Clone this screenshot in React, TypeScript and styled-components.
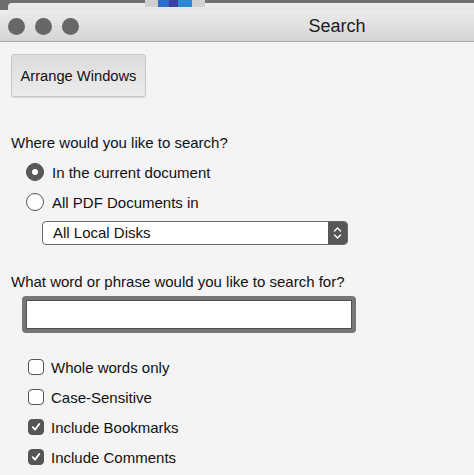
import styled, { createGlobalStyle } from 'styled-components';

const GlobalStyle = createGlobalStyle`
  html, body {
    margin: 0;
    padding: 0;
    background: #f4f4f4;
    overflow: hidden;
  }
  body {
    font-family: "Liberation Sans", Arial, sans-serif;
    color: #111;
  }
`;

const Screen = styled.div`
  width: 474px;
  height: 475px;
  overflow: hidden;
  background: #f4f4f4;
`;

const Desktop = styled.div`
  height: 10px;
  background: #6f6f6f;
  display: flex;
  padding: 3px 0 0 8px;
  box-sizing: border-box;
`;

const BackWindow = styled.div`
  flex: 1;
  display: flex;
  align-items: flex-start;
  background: linear-gradient(#efefef, #e4e4e4);
  border-top-left-radius: 4px;
  padding-left: 137px;
`;

const DockIcon = styled.div`
  width: 60px;
  height: 7px;
  margin-top: -3px;
  background: linear-gradient(
    to right,
    #cfcfcf 0 22%,
    #2a6fd0 22% 40%,
    #3a3fa8 40% 55%,
    #2a8ad8 55% 78%,
    #d2d2d2 78%
  );
`;

const Window = styled.div`
  width: 674px;
`;

const TitleBar = styled.div`
  height: 30px;
  display: grid;
  grid-template-columns: 1fr auto 1fr;
  align-items: center;
  background: linear-gradient(#ececec, #d5d5d5);
  border-bottom: 1px solid #a9a9a9;
  padding: 1px 8px 0;
  box-sizing: content-box;
`;

const Lights = styled.div`
  display: flex;
  gap: 10px;
`;

const Light = styled.span`
  width: 17px;
  height: 17px;
  border-radius: 50%;
  background: #676767;
`;

const Title = styled.div`
  font-size: 18px;
  color: #1c1c1c;
`;

const Content = styled.div`
  padding: 12px 11px;
  display: flex;
  flex-direction: column;
  align-items: flex-start;
`;

const PushButton = styled.button`
  width: 135px;
  height: 43px;
  font-family: inherit;
  font-size: 14.7px;
  color: #111;
  border: 1px solid #c6c6c6;
  border-radius: 3px;
  background: linear-gradient(#dcdcdc, #ececec);
  box-shadow: 0 1px 0 #d6d6d6;
  padding: 0;
`;

const Label = styled.div<{ $gap: number }>`
  font-size: 15px;
  line-height: 18px;
  margin-top: ${(p) => p.$gap}px;
`;

const OptionRow = styled.div<{ $indent: number; $gap?: number }>`
  height: 30px;
  display: flex;
  align-items: center;
  gap: ${(p) => p.$gap ?? 8}px;
  margin-left: ${(p) => p.$indent}px;
  font-size: 15px;
`;

const RadioGroup = styled.div`
  margin-top: 5px;
  display: flex;
  flex-direction: column;
`;

const Radio = styled.span<{ $on?: boolean }>`
  width: 18px;
  height: 18px;
  box-sizing: border-box;
  border-radius: 50%;
  border: 1px solid ${(p) => (p.$on ? '#4e4e4e' : '#555')};
  background: ${(p) => (p.$on ? '#595959' : '#fff')};
  display: flex;
  align-items: center;
  justify-content: center;
  &::after {
    content: '';
    display: ${(p) => (p.$on ? 'block' : 'none')};
    width: 6px;
    height: 6px;
    border-radius: 50%;
    background: #fff;
  }
`;

const Check = styled.span<{ $on?: boolean }>`
  width: 16px;
  height: 16px;
  box-sizing: border-box;
  border-radius: 4px;
  border: 1px solid #555;
  background: ${(p) => (p.$on ? '#555' : '#fff')};
  display: flex;
  align-items: center;
  justify-content: center;
`;

const Select = styled.div`
  margin: 4px 0 0 31px;
  width: 306px;
  height: 24px;
  box-sizing: border-box;
  border: 1px solid #6a6a6a;
  border-radius: 4px;
  background: #fff;
  display: flex;
  overflow: hidden;
`;

const SelectText = styled.div`
  flex: 1;
  font-size: 15px;
  line-height: 22px;
  padding-left: 10px;
`;

const Stepper = styled.div`
  width: 19px;
  background: #575757;
  display: flex;
  align-items: center;
  justify-content: center;
`;

const TextField = styled.div`
  margin: 5px 0 0 11px;
  width: 334px;
  height: 37px;
  box-sizing: border-box;
  border: 4px solid #767676;
  border-radius: 4px;
  background: #fff;
  box-shadow: inset 0 0 0 1px #505050;
`;

const Checks = styled.div`
  margin-top: 19px;
  display: flex;
  flex-direction: column;
`;

const Tick = () => (
  <svg width="10" height="10" viewBox="0 0 10 10">
    <path d="M1.8 5.2 L4 7.6 L8.3 2" fill="none" stroke="#fff" strokeWidth="1.9" strokeLinecap="round" strokeLinejoin="round" />
  </svg>
);

const Arrows = () => (
  <svg width="9" height="14" viewBox="0 0 9 14">
    <path d="M1.5 5 L4.5 2 L7.5 5 M1.5 9 L4.5 12 L7.5 9" fill="none" stroke="#fff" strokeWidth="1.4" strokeLinecap="round" strokeLinejoin="round" />
  </svg>
);

const options = [
  { label: 'Whole words only', on: false },
  { label: 'Case-Sensitive', on: false },
  { label: 'Include Bookmarks', on: true },
  { label: 'Include Comments', on: true },
];

export default function App() {
  return (
    <Screen>
      <GlobalStyle />
      <Desktop>
        <BackWindow>
          <DockIcon />
        </BackWindow>
      </Desktop>
      <Window>
        <TitleBar>
          <Lights>
            <Light />
            <Light />
            <Light />
          </Lights>
          <Title>Search</Title>
          <span />
        </TitleBar>
        <Content>
          <PushButton>Arrange Windows</PushButton>
          <Label $gap={37}>Where would you like to search?</Label>
          <RadioGroup>
            <OptionRow $indent={15}>
              <Radio $on />
              In the current document
            </OptionRow>
            <OptionRow $indent={15}>
              <Radio />
              All PDF Documents in
            </OptionRow>
          </RadioGroup>
          <Select>
            <SelectText>All Local Disks</SelectText>
            <Stepper>
              <Arrows />
            </Stepper>
          </Select>
          <Label $gap={28}>What word or phrase would you like to search for?</Label>
          <TextField />
          <Checks>
            {options.map((o) => (
              <OptionRow key={o.label} $indent={17} $gap={7}>
                <Check $on={o.on}>{o.on && <Tick />}</Check>
                {o.label}
              </OptionRow>
            ))}
          </Checks>
        </Content>
      </Window>
    </Screen>
  );
}
